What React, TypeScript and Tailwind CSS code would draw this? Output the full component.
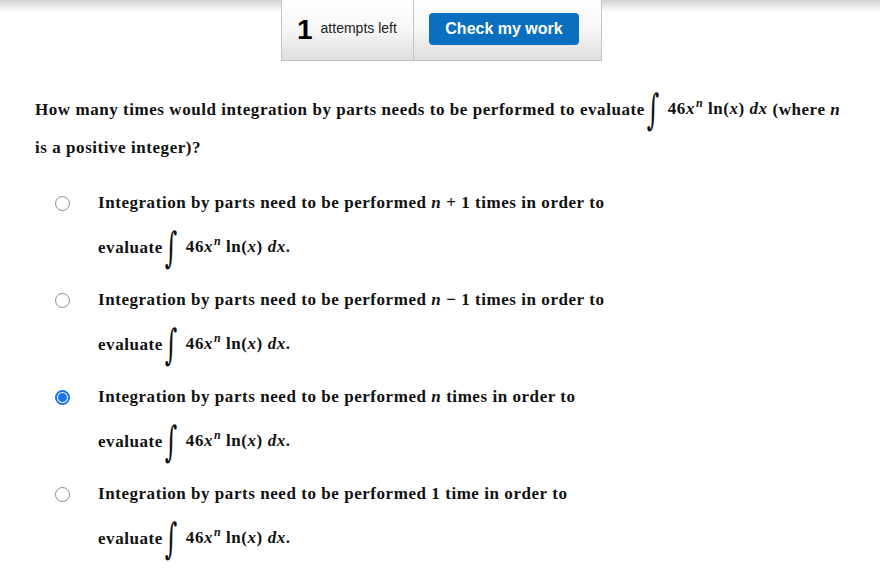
import React from "react";

const serif = { fontFamily: '"Liberation Serif", "Times New Roman", serif' };
const sans = { fontFamily: '"Liberation Sans", Arial, sans-serif' };
const dejavu = { fontFamily: '"DejaVu Serif", serif' };

function Integral() {
  return (
    <span className="relative ml-[4px] mr-[10px] inline-block w-[9px] h-[42px] align-middle">
      <span
        className="absolute left-[-2px] top-[0px] font-normal text-[24px] leading-[42px] origin-center scale-y-[1.75]"
        style={dejavu}
      >
        ∫
      </span>
    </span>
  );
}

function Expr({ dot }: { dot?: boolean }) {
  return (
    <span className="whitespace-nowrap">
      <Integral />
      <span>
        46<i>x</i>
        <span className="text-[12px] italic relative top-[-7px] ml-[1px]">n</span> ln(<i>x</i>) <i>dx</i>
        {dot ? "." : ""}
      </span>
    </span>
  );
}

function Option({ checked, children }: { checked?: boolean; children: React.ReactNode }) {
  return (
    <div className="flex">
      <div className="w-[63px] h-[30px] flex items-center pl-[20px] shrink-0">
        <span
          className={
            checked
              ? "w-[15px] h-[15px] rounded-full border-2 border-[#1a73e8] flex items-center justify-center bg-white"
              : "w-[15px] h-[15px] rounded-full border border-[#8a8a8a] bg-white"
          }
        >
          {checked ? <span className="w-[9px] h-[9px] rounded-full bg-[#1a73e8]" /> : null}
        </span>
      </div>
      <div className="flex flex-col">
        <div className="h-[30px] flex items-center">{children}</div>
        <div className="h-[60px] flex items-center">
          evaluate <Expr dot />
        </div>
      </div>
    </div>
  );
}

export default function App() {
  return (
    <div className="w-[880px] h-[577px] bg-white text-[#111] overflow-hidden relative">
      <div className="absolute left-0 top-0 w-full h-[12px] bg-gradient-to-b from-[#d2d2d2] to-white" />
      <div className="relative flex justify-start pl-[281px]">
        <div className="flex h-[61px] border-x border-b border-[#c4c4c4] bg-gradient-to-b from-white via-[#f6f6f6] to-[#dedede]">
          <div className="w-[132px] flex items-center pl-[15px] border-r border-[#c4c4c4]" style={sans}>
            <span className="text-[28px] font-bold leading-none text-black">1</span>
            <span className="ml-[8px] text-[14px] text-[#222] relative top-[-2px]">attempts left</span>
          </div>
          <div className="w-[187px] flex items-center pl-[15px]">
            <button
              className="w-[150px] h-[32px] rounded-[4px] bg-[#0b6fc0] text-white text-[16px] font-bold relative top-[-1px]"
              style={sans}
            >
              Check my work
            </button>
          </div>
        </div>
      </div>

      <div className="pl-[35px] pt-[30px] font-bold text-[17px] tracking-[0.55px]" style={serif}>
        <div className="h-[38px] flex items-center whitespace-nowrap">
          How many times would integration by parts needs to be performed to evaluate <Expr />
          &nbsp;(where&nbsp;<i>n</i>
        </div>
        <div className="h-[38px] flex items-center">is a positive integer)?</div>

        <div className="mt-[21px] flex flex-col gap-[7px]">
          <Option>
            Integration by parts need to be performed&nbsp;<i>n</i>&nbsp;+ 1 times in order to
          </Option>
          <Option>
            Integration by parts need to be performed&nbsp;<i>n</i>&nbsp;− 1 times in order to
          </Option>
          <Option checked>
            Integration by parts need to be performed&nbsp;<i>n</i>&nbsp;times in order to
          </Option>
          <Option>Integration by parts need to be performed 1 time in order to</Option>
        </div>
      </div>
    </div>
  );
}
